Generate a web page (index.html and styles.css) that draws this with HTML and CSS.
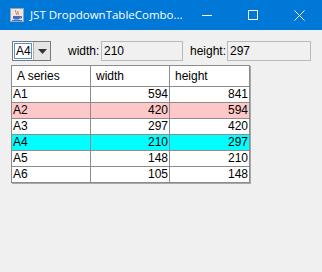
FILE: index.html
```html
<!DOCTYPE html>
<html>
<head>
<meta charset="utf-8">
<link rel="stylesheet" href="styles.css">
</head>
<body>
<div class="window">
  <div class="titlebar">
    <svg class="appicon" width="14" height="14" viewBox="0 0 14 14">
      <rect x="0.5" y="0.5" width="13" height="13" fill="#e8e8e8" stroke="#9aa4b0"/>
      <path d="M6 2 C4 4 8 5 6 7 M8 3 C7 4.5 9 5.5 8 7" stroke="#e0701c" stroke-width="1" fill="none"/>
      <path d="M3 8 H10 V9.5 C10 11 9 11.5 8 11.5 H5 C4 11.5 3 11 3 9.5 Z" fill="#3a6fc4"/>
      <path d="M10 8.5 H11.5 V10 H10" stroke="#3a6fc4" fill="none"/>
      <rect x="2" y="12" width="10" height="1" fill="#3a6fc4"/>
    </svg>
    <span class="title">JST DropdownTableCombo...</span>
    <div class="controls">
      <span class="ctl"><svg width="10" height="10" viewBox="0 0 10 10"><path d="M0 5.5 H10" stroke="#fff"/></svg></span>
      <span class="ctl"><svg width="10" height="10" viewBox="0 0 10 10"><rect x="0.5" y="0.5" width="9" height="9" stroke="#fff" fill="none"/></svg></span>
      <span class="ctl"><svg width="11" height="11" viewBox="0 0 11 11"><path d="M0.5 0.5 L10.5 10.5 M10.5 0.5 L0.5 10.5" stroke="#fff"/></svg></span>
    </div>
  </div>
  <div class="content">
    <div class="toolbar">
      <div class="combo">
        <span class="combo-value">A4</span>
        <span class="combo-btn"><svg width="9" height="5" viewBox="0 0 9 5"><path d="M0 0 H9 L4.5 5 Z" fill="#333"/></svg></span>
      </div>
      <span class="label label-w">width:</span>
      <span class="field field-w">210</span>
      <span class="label label-h">height:</span>
      <span class="field field-h">297</span>
    </div>
    <div class="grid">
      <div class="hd">A series</div><div class="hd">width</div><div class="hd">height</div>
      <div class="c">A1</div><div class="c n">594</div><div class="c n">841</div>
      <div class="c pink">A2</div><div class="c n pink">420</div><div class="c n pink">594</div>
      <div class="c">A3</div><div class="c n">297</div><div class="c n">420</div>
      <div class="c cyan">A4</div><div class="c n cyan">210</div><div class="c n cyan">297</div>
      <div class="c">A5</div><div class="c n">148</div><div class="c n">210</div>
      <div class="c">A6</div><div class="c n">105</div><div class="c n">148</div>
    </div>
  </div>
</div>
</body>
</html>
```
FILE: styles.css
```css
html, body {
  margin: 0;
  padding: 0;
}
body {
  width: 322px;
  height: 272px;
  background: #f0f0f0;
  font-family: "Liberation Sans", Arial, sans-serif;
  font-size: 12px;
  color: #000;
  overflow: hidden;
}
.window {
  width: 322px;
  height: 272px;
  display: flex;
  flex-direction: column;
}
.titlebar {
  height: 30px;
  background: #0078d7;
  display: flex;
  align-items: center;
  color: #fff;
  flex-shrink: 0;
}
.appicon {
  margin-left: 10px;
  margin-right: 6px;
}
.title {
  font-family: "Open Sans", "Noto Sans", sans-serif;
  font-size: 11.5px;
  white-space: nowrap;
  flex: 1;
  margin-top: -1px;
}
.controls {
  display: flex;
  height: 30px;
}
.ctl {
  width: 46px;
  height: 30px;
  display: flex;
  align-items: center;
  justify-content: center;
}
.content {
  padding: 11px 0 0 11px;
}
.toolbar {
  display: flex;
  align-items: center;
  height: 20px;
  margin-left: 1px;
}
.combo {
  display: flex;
  height: 20px;
  box-sizing: border-box;
  border: 1px solid #7a7a7a;
  background: #fff;
}
.combo-value {
  width: 18px;
  height: 16px;
  margin: 1px;
  box-sizing: border-box;
  border: 1px solid #5a8fd0;
  line-height: 14px;
  padding-left: 1px;
  font-size: 12px;
}
.combo-btn {
  width: 16px;
  height: 18px;
  background: #e5e5e5;
  border-left: 1px solid #adadad;
  display: flex;
  align-items: center;
  justify-content: center;
}
.label {
  line-height: 20px;
  white-space: nowrap;
}
.label-w {
  margin-left: 17px;
  width: 33px;
}
.label-h {
  margin-left: 7px;
  width: 37px;
}
.field {
  height: 20px;
  box-sizing: border-box;
  border: 1px solid #b9b9b9;
  background: #f0f0f0;
  line-height: 18px;
  padding-left: 2px;
}
.field-w {
  width: 82px;
}
.field-h {
  width: 84px;
}
.grid {
  margin-top: 4px;
  display: grid;
  grid-template-columns: 78px 78px 79px;
  grid-template-rows: 20px repeat(6, 15px);
  gap: 1px;
  width: 237px;
  background: #8c8c8c;
  border: 1px solid #8c8c8c;
  box-shadow: 1px 1px 0 #a8a8a8;
}
.grid .hd {
  background: #fff;
  line-height: 20px;
  padding-left: 5px;
}
.grid .c {
  background: #fff;
  line-height: 15px;
  padding-left: 1px;
}
.grid .n {
  text-align: right;
  padding-left: 0;
  padding-right: 1px;
}
.grid .pink {
  background: #ffc8c8;
}
.grid .cyan {
  background: #00ffff;
}
```
